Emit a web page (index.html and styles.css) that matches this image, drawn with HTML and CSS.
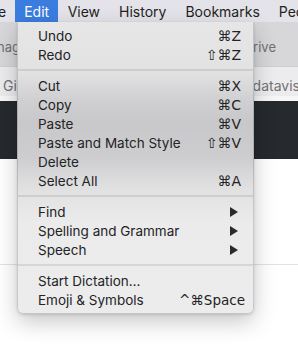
FILE: index.html
```html
<!DOCTYPE html>
<html>
<head>
<meta charset="utf-8">
<link rel="stylesheet" href="styles.css">
</head>
<body>
<div class="screen">
  <div class="menubar">
    <span class="mb-item mb-e">e</span>
    <span class="mb-item mb-active">Edit</span>
    <span class="mb-item">View</span>
    <span class="mb-item">History</span>
    <span class="mb-item">Bookmarks</span>
    <span class="mb-item">Peo</span>
  </div>
  <div class="toolbar">
    <span class="tb-left">nag</span>
    <span class="tb-right">Drive</span>
  </div>
  <div class="bookmarks">
    <span class="bk-left">Gi</span>
    <span class="bk-right">datavis</span>
  </div>
  <div class="strip"></div>
  <div class="dark"></div>
  <div class="white-area"></div>
  <div class="white-bottom"></div>

  <div class="menu">
    <div class="row"><span class="label">Undo</span><span class="key">⌘Z</span></div>
    <div class="row"><span class="label">Redo</span><span class="key">⇧⌘Z</span></div>
    <div class="sep"></div>
    <div class="row"><span class="label">Cut</span><span class="key">⌘X</span></div>
    <div class="row"><span class="label">Copy</span><span class="key">⌘C</span></div>
    <div class="row"><span class="label">Paste</span><span class="key">⌘V</span></div>
    <div class="row"><span class="label">Paste and Match Style</span><span class="key">⇧⌘V</span></div>
    <div class="row"><span class="label">Delete</span></div>
    <div class="row"><span class="label">Select All</span><span class="key">⌘A</span></div>
    <div class="sep"></div>
    <div class="row"><span class="label">Find</span><span class="arrow"></span></div>
    <div class="row"><span class="label">Spelling and Grammar</span><span class="arrow"></span></div>
    <div class="row"><span class="label">Speech</span><span class="arrow"></span></div>
    <div class="sep"></div>
    <div class="row"><span class="label">Start Dictation…</span></div>
    <div class="row"><span class="label">Emoji &amp; Symbols</span><span class="key key-wide">^⌘Space</span></div>
  </div>
</div>
</body>
</html>
```
FILE: styles.css
```css
* { box-sizing: border-box; }
html, body {
  margin: 0;
  padding: 0;
  width: 298px;
  height: 348px;
  overflow: hidden;
  background: #ffffff;
  font-family: "Inter", "Liberation Sans", "DejaVu Sans", sans-serif;
}
.screen {
  position: relative;
  width: 298px;
  height: 348px;
  display: flex;
  flex-direction: column;
  overflow: hidden;
}
.menubar {
  height: 22px;
  background: #e4e3e9;
  display: flex;
  align-items: stretch;
  font-size: 14px;
  color: #1f1f22;
  white-space: nowrap;
  flex: none;
}
.mb-item {
  display: flex;
  align-items: center;
  padding: 0 9.5px;
}
.mb-e {
  margin-left: -2px;
  padding: 0 9px 0 0;
}
.mb-active {
  background: #3b7ddf;
  color: #ffffff;
  padding: 0 9px;
}
.toolbar {
  height: 44px;
  background: #d7d7da;
  display: flex;
  justify-content: space-between;
  align-items: center;
  font-size: 13px;
  color: #707070;
  padding-top: 6px;
  flex: none;
}
.tb-left { margin-left: -3px; }
.tb-right { margin-right: 22px; }
.bookmarks {
  height: 30px;
  background: #ececee;
  display: flex;
  justify-content: space-between;
  align-items: center;
  font-size: 14px;
  color: #727272;
  padding-top: 8px;
  flex: none;
  border-top: 1px solid #cfcfd2;
}
.bk-left { margin-left: 3px; }
.bk-right { margin-right: -2px; }
.strip {
  height: 5px;
  background: #f6f6f6;
  flex: none;
}
.dark {
  height: 58px;
  background: #262a2e;
  flex: none;
}
.white-area {
  height: 106px;
  background: #ffffff;
  border-bottom: 1px solid #e2e2e4;
  flex: none;
}
.white-bottom {
  flex: 1;
  background: #ffffff;
}
.menu {
  position: absolute;
  left: 17px;
  top: 22px;
  width: 237px;
  padding: 4px 0;
  background: linear-gradient(to bottom,
    #e6e6e7 0px, #e2e2e3 50px, #d0d0d2 78px, #c8c8ca 100px, #cdcdcf 135px, #e0e0e1 165px, #ebebeb 200px, #ececec 291px);
  border: 1px solid rgba(0,0,0,0.14);
  border-top: none;
  border-radius: 0 0 6px 6px;
  box-shadow: 0 8px 22px rgba(0,0,0,0.22), 0 1px 3px rgba(0,0,0,0.12);
  font-size: 13.5px;
  color: #232326;
}
.row {
  height: 19px;
  display: flex;
  align-items: center;
  justify-content: space-between;
  padding: 0 12px 0 20px;
  white-space: nowrap;
}
.key {
  font-family: "DejaVu Sans", "Inter", sans-serif;
  font-size: 14px;
  letter-spacing: 0px;
}
.key-wide { margin-right: -4px; font-size: 13.5px; }
.arrow {
  width: 0;
  height: 0;
  border-top: 5px solid transparent;
  border-bottom: 5px solid transparent;
  border-left: 8px solid #2a2a2c;
  margin-right: 3px;
}
.sep {
  height: 12px;
  display: flex;
  align-items: center;
}
.sep::before {
  content: "";
  display: block;
  width: 100%;
  height: 2px;
  background: rgba(0,0,0,0.09);
}
```
